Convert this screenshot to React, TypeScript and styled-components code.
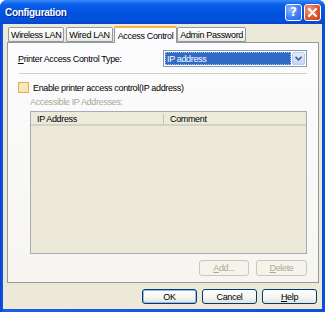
import React from "react";
import styled, { createGlobalStyle } from "styled-components";

const Global = createGlobalStyle`
  html, body { margin: 0; padding: 0; background: #ffffff; }
  body { font-family: "Liberation Sans", Arial, sans-serif; }
  * { box-sizing: border-box; }
`;

const Window = styled.div`
  width: 325px;
  height: 312px;
  display: flex;
  flex-direction: column;
  background: linear-gradient(90deg, #0842d0 0px, #1a5ef0 4px, #0a4fe0 100%);
  border-radius: 7px 7px 0 0;
  overflow: hidden;
`;

const TitleBar = styled.div`
  height: 24px;
  flex: none;
  display: flex;
  align-items: center;
  padding: 0 4px 0 5px;
  background: linear-gradient(180deg, #3a8cfa 0%, #0a5fe9 18%, #0154e0 50%, #0350dc 85%, #0746c8 100%);
`;

const Title = styled.div`
  flex: 1;
  color: #ffffff;
  font-family: "Liberation Sans", Arial, sans-serif;
  font-weight: bold;
  font-size: 10px;
  letter-spacing: -0.3px;
  text-shadow: 1px 1px 0 #0a1e8a;
`;

const CapButton = styled.div<{ $red?: boolean }>`
  width: 17px;
  height: 17px;
  margin-left: 2px;
  border: 1px solid #ffffff;
  border-radius: 3px;
  display: flex;
  align-items: center;
  justify-content: center;
  background: ${(p) =>
    p.$red
      ? "radial-gradient(circle at 30% 30%, #f39a7e 0%, #e0582f 55%, #c6401f 100%)"
      : "radial-gradient(circle at 30% 30%, #8fb4ff 0%, #3f7ef6 55%, #2a62de 100%)"};
  color: #ffffff;
  font-family: "DejaVu Sans", sans-serif;
  font-weight: bold;
  font-size: 12px;
`;

const Body = styled.div`
  flex: 1;
  margin: 0 3px 3px 3px;
  background: #ece9d8;
  display: flex;
  flex-direction: column;
  padding: 2px 4px 0 4px;
  font-size: 9px;
  letter-spacing: -0.35px;
`;

const TabStrip = styled.div`
  display: flex;
  align-items: flex-end;
  height: 16px;
  padding-left: 1px;
  position: relative;
  z-index: 1;
`;

const Tab = styled.div<{ $active?: boolean }>`
  height: ${(p) => (p.$active ? "17px" : "15px")};
  margin-bottom: ${(p) => (p.$active ? "-1px" : "0")};
  padding: 0 ${(p) => (p.$active ? "3px" : "2px")};
  margin-right: ${(p) => (p.$active ? "0" : "2px")};
  margin-left: ${(p) => (p.$active ? "-1px" : "0")};
  display: flex;
  align-items: center;
  color: #000000;
  border: 1px solid #919b9c;
  border-bottom: ${(p) => (p.$active ? "none" : "1px solid #919b9c")};
  border-top: ${(p) => (p.$active ? "2px solid #f2b43b" : "1px solid #919b9c")};
  border-radius: 2px 2px 0 0;
  background: ${(p) =>
    p.$active ? "#fcfcfe" : "linear-gradient(180deg, #ffffff 0%, #f3f3ef 70%, #e6e4dc 100%)"};
  white-space: nowrap;
`;

const Panel = styled.div`
  width: 312px;
  height: 241px;
  border: 1px solid #919b9c;
  background: linear-gradient(180deg, #fcfcfe 0%, #f6f5f0 100%);
  display: flex;
  flex-direction: column;
  padding: 7px 11px 0 10px;
`;

const Row = styled.div`
  display: flex;
  align-items: center;
  justify-content: space-between;
  height: 17px;
`;

const Label = styled.span<{ $disabled?: boolean }>`
  color: ${(p) => (p.$disabled ? "#aca899" : "#000000")};
  white-space: nowrap;
`;

const Select = styled.div`
  width: 144px;
  height: 17px;
  border: 1px solid #7f9db9;
  background: #ffffff;
  display: flex;
  align-items: stretch;
  padding: 1px;
`;

const SelectValue = styled.div`
  flex: 1;
  background: #316ac5;
  color: #ffffff;
  display: flex;
  align-items: center;
  padding-left: 2px;
  outline: 1px dotted #a9c0ea;
  outline-offset: -1px;
`;

const SelectArrow = styled.div`
  width: 13px;
  margin-left: 1px;
  border: 1px solid #bccbf0;
  border-radius: 2px;
  background: linear-gradient(180deg, #e3ebfd 0%, #c5d5fb 100%);
  display: flex;
  align-items: center;
  justify-content: center;
`;

const Separator = styled.div`
  height: 2px;
  margin: 6px 0 6px 1px;
  border-top: 1px solid #d0d0bf;
  border-bottom: 1px solid #ffffff;
`;

const CheckRow = styled.div`
  display: flex;
  align-items: center;
  height: 13px;
  gap: 4px;
`;

const CheckBox = styled.div`
  width: 11px;
  height: 11px;
  border: 1px solid #d9b35f;
  background: linear-gradient(135deg, #fbeecf 0%, #f2dfa8 100%);
  box-shadow: inset 0 0 0 1px #f6e3ad;
`;

const Indented = styled.div`
  padding-left: 12px;
  display: flex;
  flex-direction: column;
  flex: 1;
`;

const SubLabel = styled.div`
  height: 13px;
  display: flex;
  align-items: center;
  margin-top: 1px;
`;

const ListBox = styled.div`
  margin-top: 3px;
  height: 143px;
  border: 1px solid #a5acb5;
  background: #ece9d8;
  display: flex;
  flex-direction: column;
`;

const ListHeader = styled.div`
  height: 14px;
  display: grid;
  grid-template-columns: 133px 1fr;
  background: #ebeadb;
  border-bottom: 2px solid #d6d2c2;
`;

const HeaderCell = styled.div<{ $last?: boolean }>`
  color: #000000;
  display: flex;
  align-items: center;
  padding-left: 6px;
  border-right: ${(p) => (p.$last ? "none" : "1px solid #c7c5b2")};
  margin: ${(p) => (p.$last ? "0" : "2px 0")};
`;

const ListButtons = styled.div`
  display: flex;
  justify-content: flex-end;
  gap: 7px;
  margin-top: 6px;
`;

const Button = styled.div<{ $disabled?: boolean; $w?: number; $default?: boolean }>`
  width: ${(p) => p.$w ?? 55}px;
  height: ${(p) => (p.$disabled ? 16 : 15)}px;
  border: 1px solid ${(p) => (p.$disabled ? "#c9c7ba" : "#003c74")};
  border-radius: 3px;
  background: ${(p) =>
    p.$disabled ? "#f5f4ea" : "linear-gradient(180deg, #ffffff 0%, #f4f4f0 60%, #e3e2da 100%)"};
  color: ${(p) => (p.$disabled ? "#aca899" : "#000000")};
  display: flex;
  align-items: center;
  justify-content: center;
  box-shadow: ${(p) => (p.$default ? "inset 0 0 0 1px #9db8ec" : "none")};
`;

const Footer = styled.div`
  display: flex;
  justify-content: flex-end;
  gap: 5px;
  padding: 6px 1px 0 0;
`;

const U = styled.span`
  text-decoration: underline;
`;

export default function App() {
  return (
    <>
      <Global />
      <Window>
        <TitleBar>
          <Title>Configuration</Title>
          <CapButton>?</CapButton>
          <CapButton $red>
            <svg width="9" height="9" viewBox="0 0 9 9">
              <path d="M1 1 L8 8 M8 1 L1 8" stroke="#ffffff" strokeWidth="2" strokeLinecap="square" />
            </svg>
          </CapButton>
        </TitleBar>
        <Body>
          <TabStrip>
            <Tab>Wireless LAN</Tab>
            <Tab>Wired LAN</Tab>
            <Tab $active>Access Control</Tab>
            <Tab>Admin Password</Tab>
          </TabStrip>
          <Panel>
            <Row>
              <Label>
                <U>P</U>rinter Access Control Type:
              </Label>
              <Select>
                <SelectValue>IP address</SelectValue>
                <SelectArrow>
                  <svg width="7" height="5" viewBox="0 0 7 5">
                    <path d="M0.5 0.8 L3.5 3.8 L6.5 0.8" stroke="#4d6185" strokeWidth="1.6" fill="none" />
                  </svg>
                </SelectArrow>
              </Select>
            </Row>
            <Separator />
            <CheckRow>
              <CheckBox />
              <Label>Enable printer access control(IP address)</Label>
            </CheckRow>
            <Indented>
              <SubLabel>
                <Label $disabled>Accessible IP Addresses:</Label>
              </SubLabel>
              <ListBox>
                <ListHeader>
                  <HeaderCell>IP Address</HeaderCell>
                  <HeaderCell $last>Comment</HeaderCell>
                </ListHeader>
              </ListBox>
              <ListButtons>
                <Button $disabled $w={50}>
                  <U>A</U>dd...
                </Button>
                <Button $disabled $w={51}>
                  <U>D</U>elete
                </Button>
              </ListButtons>
            </Indented>
          </Panel>
          <Footer>
            <Button $default>OK</Button>
            <Button>Cancel</Button>
            <Button>
              <U>H</U>elp
            </Button>
          </Footer>
        </Body>
      </Window>
    </>
  );
}
